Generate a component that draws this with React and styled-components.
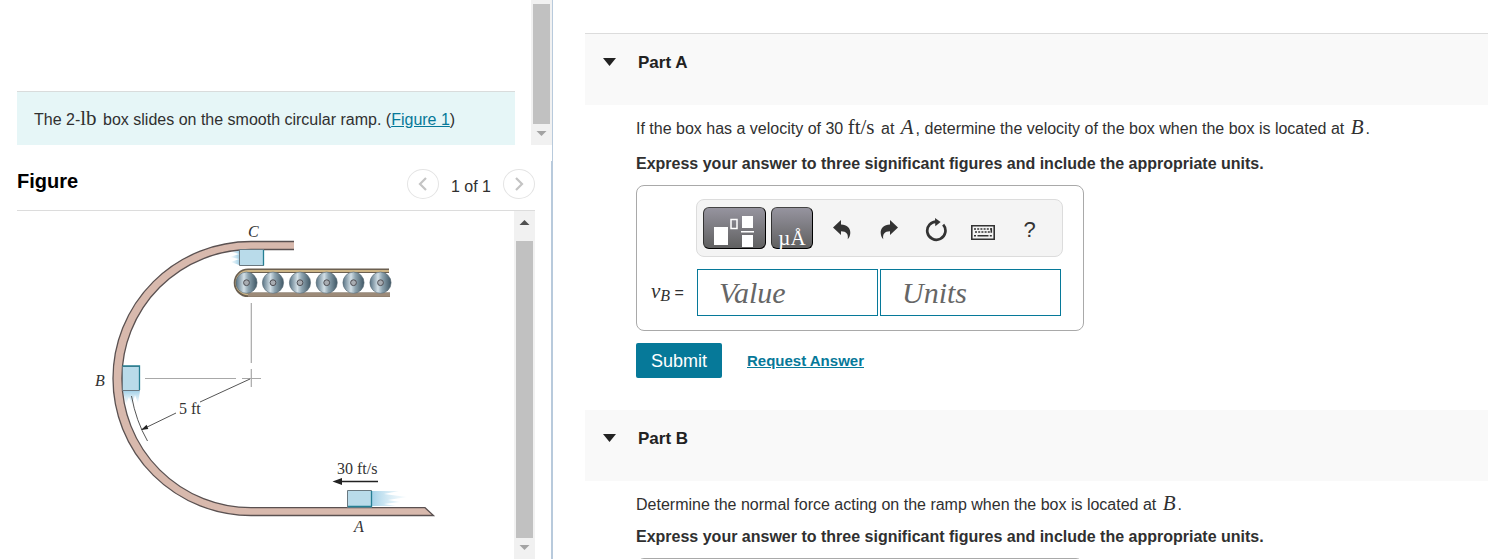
import React from 'react'
import styled, { createGlobalStyle } from 'styled-components'

const GlobalStyle = createGlobalStyle`
  * {
    box-sizing: border-box;
  }
  body {
    margin: 0;
    background: #fff;
    color: #303030;
    font: 16px/24px "Liberation Sans", Arial, sans-serif;
  }
  h2, h3, p {
    margin: 0;
  }
  a {
    color: #067999;
  }
`

const Page = styled.div`
  display: grid;
  grid-template-columns: minmax(0, 553fr) minmax(0, 935fr);
  grid-template-rows: minmax(0, 1fr);
  height: 100vh;
  overflow: hidden;
`

/* left column */
const Sidebar = styled.aside`
  display: flex;
  flex-direction: column;
  min-height: 0;
`
const IntroPane = styled.section`
  display: flex;
  align-items: flex-end;
  height: 161px;
  padding: 0 0 16px 17px;
  border-right: 1px solid #b8cadc;
`
const Intro = styled.p`
  flex: 1;
  margin-right: 16px;
  padding: 16px 17px 13px;
  background: #e6f6f7;
  border-top: 1px solid #d9dcdc;
`
const FigurePane = styled.section`
  display: flex;
  flex-direction: column;
  flex: 1;
  min-height: 0;
  padding: 0 16px 0 17px;
  border-right: 2px solid #b8cadc;
`
const FigureHeader = styled.header`
  display: flex;
  align-items: center;
  flex-shrink: 0;
  height: 50px;
  padding-bottom: 4px;
  border-bottom: 1px solid #dcdcdc;
`
const FigureTitle = styled.h2`
  flex: 1;
  padding-bottom: 6px;
  color: #000;
  font-size: 20px;
`
const Pager = styled.nav`
  display: flex;
  align-items: center;
  gap: 12px;
`
const PageCount = styled.span`
  padding-top: 6px;
`
const PageButton = styled.button`
  display: flex;
  align-items: center;
  justify-content: center;
  width: 32px;
  height: 30px;
  padding: 0;
  background: #fff;
  border: 1px solid #e4e4e4;
  border-radius: 50%;
`
const FigureBody = styled.div`
  display: flex;
  flex: 1;
  min-height: 0;
`
const FigureArea = styled.div`
  flex: 1;
  min-width: 0;
  overflow: hidden;
`
const FigureDrawing = styled.svg`
  display: block;
  font-family: "Liberation Serif", "Times New Roman", serif;
  font-size: 16px;
`

/* scrollbars */
const Track = styled.div`
  display: flex;
  flex-direction: column;
  align-items: center;
  align-self: stretch;
  width: 21px;
  background: #f1f1f1;
`
const Thumb = styled.div`
  flex: 1;
  width: 17px;
  margin-top: ${({ $top }) => $top || 0}px;
  background: #c1c1c1;
`
const TrackArrow = styled.svg`
  flex-shrink: 0;
  width: 11px;
  height: 5px;
  margin: ${({ $up }) => ($up ? '9px 0 16px' : '7px 0 9px')};
`

/* right column */
const Main = styled.main`
  min-width: 0;
  padding: 33px 0 0 32px;
`
const PartHeader = styled.header`
  display: flex;
  align-items: flex-start;
  gap: 22px;
  height: ${({ $first }) => ($first ? 72 : 71)}px;
  padding: 17px 18px;
  background: #f9f9f9;
  border-top: ${({ $first }) => ($first ? '1px solid #dcdcdc' : 'none')};
`
const Toggle = styled.button`
  display: flex;
  align-items: center;
  height: 22px;
  padding: 0;
  background: none;
  border: 0;
`
const PartTitle = styled.h3`
  color: #222;
  font-size: 17px;
`
const PartBody = styled.div`
  padding: 12px 16px 32px 51px;
`
const Question = styled.p`
  line-height: 24px;
`
const Instruction = styled.p`
  margin: ${({ $tight }) => ($tight ? 8 : 11)}px 0 9px;
  font-weight: bold;
`
const Tex = styled.span`
  margin: 0 2px 0 ${({ $italic }) => ($italic ? 2 : 0)}px;
  font-family: "Liberation Serif", "Times New Roman", serif;
  font-size: 21px;
  line-height: 20px;
  font-style: ${({ $italic }) => ($italic ? 'italic' : 'normal')};
`
const AnswerBox = styled.div`
  width: fit-content;
  min-width: 448px;
  min-height: 146px;
  padding: 13px 20px 14px 14px;
  border: 1px solid #a9a9a9;
  border-radius: 8px;
`
const Toolbar = styled.div`
  display: flex;
  align-items: center;
  height: 58px;
  width: 367px;
  margin: 0 0 12px 45px;
  padding: 0 6px;
  background: #f4f4f4;
  border: 1px solid #dcdcdc;
  border-radius: 8px;
`
const DarkButton = styled.button`
  display: flex;
  align-items: flex-end;
  justify-content: center;
  width: ${({ $wide }) => ($wide ? 63 : 42)}px;
  height: 42px;
  margin-right: 5px;
  padding: 0;
  color: #fff;
  background: linear-gradient(#96949f, #606060);
  border: 1px solid #000;
  border-top-color: #444;
  border-left-color: #333;
  border-radius: 6px;
  font: 21px/20px "Liberation Serif", "Times New Roman", serif;
`
const ToolButton = styled.button`
  display: flex;
  align-items: center;
  justify-content: center;
  width: 47px;
  height: 42px;
  padding: 4px 0 0;
  color: #333;
  background: none;
  border: 0;
  font: 22px/24px "Liberation Sans", Arial, sans-serif;
`
const AnswerRow = styled.div`
  display: flex;
  align-items: center;
  gap: 2px;
`
const AnswerLabel = styled.label`
  width: 44px;
  white-space: nowrap;

  sub {
    font-size: 16px;
    line-height: 0;
    vertical-align: -3px;
  }
`
const Variable = styled(Tex)`
  margin: 0;
`
const AnswerInput = styled.input`
  width: 181px;
  height: 47px;
  padding: 0 21px;
  border: 1px solid #067999;
  border-radius: 0;
  font: italic 30px/40px "Liberation Serif", "Times New Roman", serif;

  &::placeholder {
    color: #666;
    opacity: 1;
  }
`
const Actions = styled.div`
  display: flex;
  align-items: center;
  gap: 25px;
  margin-top: 12px;
`
const SubmitButton = styled.button`
  width: 86px;
  height: 35px;
  padding: 0;
  color: #fff;
  background: #067999;
  border: 0;
  border-radius: 2px;
  font: 18px/24px "Liberation Sans", Arial, sans-serif;
`
const RequestLink = styled.a`
  font-size: 15px;
  font-weight: bold;
`

function Scrollbar ({ up, top }) {
  return (
    <Track>
      {up && (
        <TrackArrow $up viewBox='0 0 11 5'>
          <path d='M5.5 0L10.5 5H.5z' fill='#505050' />
        </TrackArrow>
      )}
      <Thumb $top={top} />
      <TrackArrow viewBox='0 0 11 5'>
        <path d='M.5 0H10.5L5.5 5z' fill='#a3a3a3' />
      </TrackArrow>
    </Track>
  )
}

function Chevron ({ d }) {
  return (
    <svg width='10' height='14' viewBox='0 0 10 14' fill='none' stroke='#c4c4c4' strokeWidth='2.2'>
      <path d={d} />
    </svg>
  )
}

function Wheel ({ x }) {
  return (
    <g>
      <circle cx={x} cy='282.7' r='10.6' fill='url(#steel)' stroke='#5b6c76' strokeWidth='.6' />
      <circle cx={x} cy='282.7' r='2.9' fill='#a9adb2' stroke='#4f4f55' strokeWidth='1' />
    </g>
  )
}

function RampFigure () {
  return (
    <FigureDrawing width='497' height='348' viewBox='17 211 497 348' role='img' aria-label='Circular ramp'>
      <defs>
        <linearGradient id='steel'>
          <stop offset='0' stopColor='#587384' />
          <stop offset='.38' stopColor='#d3e0e7' />
          <stop offset='.58' stopColor='#8fa5b1' />
          <stop offset='1' stopColor='#3f5765' />
        </linearGradient>
        <linearGradient id='fadeRight'>
          <stop offset='0' stopColor='#a5d2e8' />
          <stop offset='1' stopColor='#d5ebf5' stopOpacity='.2' />
        </linearGradient>
        <linearGradient id='fadeLeft' x1='1' x2='0'>
          <stop offset='0' stopColor='#a5d2e8' />
          <stop offset='1' stopColor='#d5ebf5' stopOpacity='.2' />
        </linearGradient>
        <linearGradient id='fadeDown' x2='0' y2='1'>
          <stop offset='0' stopColor='#a5d2e8' />
          <stop offset='1' stopColor='#d5ebf5' stopOpacity='.2' />
        </linearGradient>
      </defs>

      {/* motion trails */}
      <path d='M239 250L232 252L239 254L230 257L239 259L231 262L239 265z' fill='url(#fadeLeft)' />
      <path d='M123 391L126 404L129 397L132 405L135 395L138 403L140 391z' fill='url(#fadeDown)' />
      <path d='M372 491H399L384 494L407 497L388 500L400 502L384 504L396 506H372z' fill='url(#fadeRight)' />

      {/* ramp */}
      <path
        d='M294 241.5H251A138 137 0 0 0 251 515.5H433.5L425 507.7H251A129 129 0 0 1 251 249.5H294'
        fill='#d8b9ad'
        stroke='#5a5151'
        strokeWidth='1.3'
      />

      {/* boxes */}
      <g fill='#b9dbea' stroke='#6a7880'>
        <path d='M239.5 249.5H263.5V265.5H239.5z' />
        <path d='M122.5 366.5H139.5V390.5H122.5z' />
        <path d='M347.5 490.5H371.5V507.5H347.5z' />
      </g>
      <path d='M263.5 250V265.5M122.5 366H139.5V390M371.5 491V506.5H348' fill='none' stroke='#257f93' strokeWidth='1.3' />

      {/* conveyor */}
      <path d='M389 270.8H248A12 12 0 0 0 248 294.8H390' fill='none' stroke='#6b5f50' strokeWidth='4.6' />
      <path d='M389 271H248A11.7 11.7 0 0 0 248 294.4' fill='none' stroke='#cdb586' strokeWidth='1.8' />
      <path d='M248 294.7H390' stroke='#9c8a78' strokeWidth='4' />
      {[246.5, 273, 300, 326.7, 353.5, 380.5].map(x => <Wheel key={x} x={x} />)}

      {/* radius and centre lines */}
      <path d='M251.3 303V363M251.3 369V387M242 378.5H261M145 378.5H236' stroke='#a8a8a8' strokeWidth='1.2' />
      <path d='M250 379L200 402M176 413L142 429.5M131.5 396Q136 421 147.5 441' fill='none' stroke='#555' strokeWidth='1' />
      <path d='M141 430L146.6 424.8L148.3 429z' fill='#222' />
      <path d='M378 481.5H340' stroke='#222' strokeWidth='1.5' />
      <path d='M332.5 481.5L342 478V485z' fill='#222' />

      <g fill='#333'>
        <text x='179' y='414'>5 ft</text>
        <text x='337' y='474'>30 ft/s</text>
        <g fontStyle='italic'>
          <text x='248' y='237'>C</text>
          <text x='95' y='386'>B</text>
          <text x='354' y='532'>A</text>
        </g>
      </g>
    </FigureDrawing>
  )
}

function TemplateIcon () {
  return (
    <svg width='42' height='36' viewBox='0 0 42 36' fill='#fff'>
      <path d='M0 15H14V33H0zM28 4H39V16H28zM28 23H39V35H28zM27 19H40V20.5H27z' />
      <path d='M17 7.5H23V16.5H17z' fill='none' stroke='#fff' strokeWidth='1.5' />
    </svg>
  )
}

function UndoIcon ({ flip }) {
  return (
    <svg width='18' height='20' viewBox='0 0 18 20'>
      <path
        d='M0 7.5L8 0V4.4C14 4.6 17.6 8 17.3 13C17.2 15.5 16.3 17.6 14.7 19.2C15.6 14.2 13.6 11.2 8 11.2V15z'
        fill='#333'
        transform={flip ? 'matrix(-1 0 0 1 18 0)' : undefined}
      />
    </svg>
  )
}

function ResetIcon () {
  return (
    <svg width='22' height='24' viewBox='0 0 22 24'>
      <path d='M12 3.6A9.1 9.1 0 1 0 18.2 6.7' fill='none' stroke='#333' strokeWidth='2.7' />
      <path d='M10 0L15.6 4.1L10.3 8.2z' fill='#333' />
    </svg>
  )
}

function KeyboardIcon () {
  return (
    <svg width='24' height='19' viewBox='0 -4 24 19' fill='none' stroke='#333'>
      <path d='M.8 .8H23.2V14.2H.8z' strokeWidth='1.6' />
      <path d='M3 4H21M4 7H20M3 10.8H5M18.8 10.8H21' strokeWidth='1.6' strokeDasharray='2 1.2' />
      <path d='M6.5 10.8H17.5M20.3 3.2V7.8' strokeWidth='1.6' />
    </svg>
  )
}

function Part ({ title, first, children }) {
  return (
    <section>
      <PartHeader $first={first}>
        <Toggle aria-label={`Toggle ${title}`}>
          <svg width='13' height='8' viewBox='0 0 13 8'>
            <path d='M0 0H13L6.5 8z' fill='#222' />
          </svg>
        </Toggle>
        <PartTitle>{title}</PartTitle>
      </PartHeader>
      <PartBody>{children}</PartBody>
    </section>
  )
}

function AnswerForm () {
  return (
    <>
      <AnswerBox>
        <Toolbar>
          <DarkButton $wide aria-label='Templates'><TemplateIcon /></DarkButton>
          <DarkButton aria-label='Symbols'>µÅ</DarkButton>
          <ToolButton aria-label='Undo'><UndoIcon /></ToolButton>
          <ToolButton aria-label='Redo'><UndoIcon flip /></ToolButton>
          <ToolButton aria-label='Reset'><ResetIcon /></ToolButton>
          <ToolButton aria-label='Keyboard shortcuts'><KeyboardIcon /></ToolButton>
          <ToolButton aria-label='Help'>?</ToolButton>
        </Toolbar>
        <AnswerRow>
          <AnswerLabel htmlFor='value'>
            <Variable $italic>v<sub>B</sub></Variable> =
          </AnswerLabel>
          <AnswerInput id='value' placeholder='Value' />
          <AnswerInput aria-label='Units' placeholder='Units' />
        </AnswerRow>
      </AnswerBox>
      <Actions>
        <SubmitButton>Submit</SubmitButton>
        <RequestLink href='#answer'>Request Answer</RequestLink>
      </Actions>
    </>
  )
}

export default function App () {
  return (
    <Page>
      <GlobalStyle />
      <Sidebar>
        <IntroPane>
          <Intro>
            The 2-<Tex>lb</Tex> box slides on the smooth circular ramp. (<a href='#figure'>Figure 1</a>)
          </Intro>
          <Scrollbar top={4} />
        </IntroPane>
        <FigurePane id='figure'>
          <FigureHeader>
            <FigureTitle>Figure</FigureTitle>
            <Pager>
              <PageButton aria-label='Previous figure'><Chevron d='M8 1L2 7L8 13' /></PageButton>
              <PageCount>1 of 1</PageCount>
              <PageButton aria-label='Next figure'><Chevron d='M2 1L8 7L2 13' /></PageButton>
            </Pager>
          </FigureHeader>
          <FigureBody>
            <FigureArea>
              <RampFigure />
            </FigureArea>
            <Scrollbar up />
          </FigureBody>
        </FigurePane>
      </Sidebar>

      <Main>
        <Part title='Part A' first>
          <Question>
            If the box has a velocity of 30 <Tex>ft/s</Tex> at <Tex $italic>A</Tex>, determine the
            velocity of the box when the box is located at <Tex $italic>B</Tex>.
          </Question>
          <Instruction>
            Express your answer to three significant figures and include the appropriate units.
          </Instruction>
          <AnswerForm />
        </Part>
        <Part title='Part B'>
          <Question>
            Determine the normal force acting on the ramp when the box is located at <Tex $italic>B</Tex>.
          </Question>
          <Instruction $tight>
            Express your answer to three significant figures and include the appropriate units.
          </Instruction>
          <AnswerBox />
        </Part>
      </Main>
    </Page>
  )
}
